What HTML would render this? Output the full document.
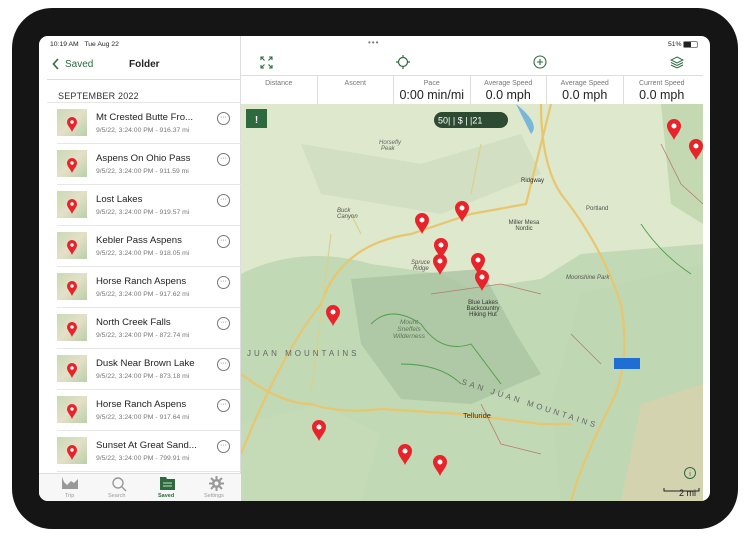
<!DOCTYPE html>
<html><head><meta charset="utf-8">
<style>
*{margin:0;padding:0;box-sizing:border-box}
body{width:750px;height:538px;background:#fff;font-family:"Liberation Sans",sans-serif;position:relative;overflow:hidden}
.frame{position:absolute;left:12px;top:8px;width:726px;height:521px;background:#151515;border-radius:40px}
.screen{position:absolute;left:39px;top:36px;width:671px;height:465px;background:#fff;border-radius:9px;overflow:hidden}
.side{position:absolute;left:0;top:0;width:202px;height:465px;background:#fff;border-right:1px solid #ddd}
.abs{position:absolute}
.row{position:absolute;left:18px;width:184px;height:41px;border-bottom:1px solid #e6e6e6}
.thumb{position:absolute;left:0;top:6px;width:30px;height:27px;background:linear-gradient(135deg,#c9d9b4,#e4e0c8 50%,#b9d0a8)}
.t{position:absolute;left:39px;top:9px;font-size:9.6px;color:#222;white-space:nowrap}
.s{position:absolute;left:39px;top:24px;font-size:6.8px;color:#777;white-space:nowrap}
.dots{position:absolute;left:160px;top:9px;width:13px;height:13px;border:1px solid #777;border-radius:50%;font-size:7px;line-height:9px;text-align:center;color:#555}
.stat{position:absolute;top:40px;height:28px;border-right:1px solid #ddd;text-align:center;width:76.5px}
.stat .l{font-size:7px;color:#777;margin-top:4px}
.stat .v{font-size:12.5px;color:#222;margin-top:1px}
.map{position:absolute;left:202px;top:68px;width:462px;height:397px;overflow:hidden;background:#dfe9cf}
</style></head><body>
<div class="frame"></div>
<div class="screen">
 <div class="side">
  <div class="abs" style="left:11px;top:5px;font-size:6.8px;color:#222">10:19 AM&nbsp;&nbsp;&nbsp;Tue Aug 22</div>
  <svg class="abs" style="left:13px;top:22px" width="8" height="12"><path d="M6 1 L1.5 6 L6 11" stroke="#2d6a3e" stroke-width="1.6" fill="none"/></svg>
  <div class="abs" style="left:26px;top:23px;font-size:10px;color:#2d6a3e">Saved</div>
  <div class="abs" style="left:90px;top:23px;font-size:10px;font-weight:bold;color:#222">Folder</div>
  <div class="abs" style="left:8px;top:43px;width:194px;height:1px;background:#ddd"></div>
  <div class="abs" style="left:19px;top:55px;font-size:9px;color:#333;letter-spacing:.2px">SEPTEMBER 2022</div>
  <div class="abs" style="left:8px;top:66px;width:194px;height:1px;background:#e6e6e6"></div>
  <div class="row" style="top:67px"><div class="thumb"></div><div class="t">Mt Crested Butte Fro...</div><div class="s">9/5/22, 3:24:00 PM - 916.37 mi</div><div class="dots">···</div></div>
  <div class="row" style="top:108px"><div class="thumb"></div><div class="t">Aspens On Ohio Pass</div><div class="s">9/5/22, 3:24:00 PM - 911.59 mi</div><div class="dots">···</div></div>
  <div class="row" style="top:149px"><div class="thumb"></div><div class="t">Lost Lakes</div><div class="s">9/5/22, 3:24:00 PM - 919.57 mi</div><div class="dots">···</div></div>
  <div class="row" style="top:190px"><div class="thumb"></div><div class="t">Kebler Pass Aspens</div><div class="s">9/5/22, 3:24:00 PM - 918.05 mi</div><div class="dots">···</div></div>
  <div class="row" style="top:231px"><div class="thumb"></div><div class="t">Horse Ranch Aspens</div><div class="s">9/5/22, 3:24:00 PM - 917.62 mi</div><div class="dots">···</div></div>
  <div class="row" style="top:272px"><div class="thumb"></div><div class="t">North Creek Falls</div><div class="s">9/5/22, 3:24:00 PM - 872.74 mi</div><div class="dots">···</div></div>
  <div class="row" style="top:313px"><div class="thumb"></div><div class="t">Dusk Near Brown Lake</div><div class="s">9/5/22, 3:24:00 PM - 873.18 mi</div><div class="dots">···</div></div>
  <div class="row" style="top:354px"><div class="thumb"></div><div class="t">Horse Ranch Aspens</div><div class="s">9/5/22, 3:24:00 PM - 917.64 mi</div><div class="dots">···</div></div>
  <div class="row" style="top:395px"><div class="thumb"></div><div class="t">Sunset At Great Sand...</div><div class="s">9/5/22, 3:24:00 PM - 799.91 mi</div><div class="dots">···</div></div>
  <svg class="abs" style="left:0;top:0" width="202" height="465">
   <defs><g id="sp"><path d="M0 0 C-1.5 -4 -5 -6.5 -5 -10 A5 5 0 1 1 5 -10 C5 -6.5 1.5 -4 0 0Z" fill="#e8232a"/><circle cx="0" cy="-10" r="1.7" fill="#fff"/></g></defs>
   <use href="#sp" x="33" y="96"/><use href="#sp" x="33" y="137"/><use href="#sp" x="33" y="178"/><use href="#sp" x="33" y="219"/><use href="#sp" x="33" y="260"/><use href="#sp" x="33" y="301"/><use href="#sp" x="33" y="342"/><use href="#sp" x="33" y="383"/><use href="#sp" x="33" y="424"/>
  </svg>
  <div class="abs" style="left:0;top:437px;width:202px;height:28px;background:#f7f7f7;border-top:1px solid #ddd"></div>
  <svg class="abs" style="left:22px;top:440px" width="18" height="14"><path d="M1 1V13H17V3L13 7 10 5 6 9 3 6Z" fill="#999"/></svg>
  <div class="abs" style="left:26px;top:457px;font-size:5.5px;color:#999">Trip</div>
  <svg class="abs" style="left:72px;top:440px" width="16" height="16"><circle cx="7" cy="7" r="5" stroke="#999" stroke-width="1.4" fill="none"/><path d="M11 11L15 15" stroke="#999" stroke-width="1.5"/></svg>
  <div class="abs" style="left:69px;top:457px;font-size:5.5px;color:#999">Search</div>
  <svg class="abs" style="left:121px;top:440px" width="15" height="14"><path d="M0 1H6L7 3H15V14H0Z" fill="#2d6a3e"/><path d="M3 7H12M3 10H12" stroke="#fff" stroke-width=".8"/></svg>
  <div class="abs" style="left:119px;top:457px;font-size:5.5px;color:#2d6a3e;font-weight:bold">Saved</div>
  <svg class="abs" style="left:170px;top:440px" width="15" height="15"><circle cx="7.5" cy="7.5" r="4.5" fill="#999"/><path d="M7.5 0V15M0 7.5H15M2 2L13 13M13 2L2 13" stroke="#999" stroke-width="2"/><circle cx="7.5" cy="7.5" r="2" fill="#f7f7f7"/></svg>
  <div class="abs" style="left:165px;top:457px;font-size:5.5px;color:#999">Settings</div>
 </div>
 <div class="abs" style="left:329px;top:2px;font-size:8px;color:#777;letter-spacing:1px">•••</div>
 <div class="abs" style="left:629px;top:5px;font-size:6.8px;color:#222">51%</div>
 <div class="abs" style="left:644px;top:5px;width:15px;height:7px;border:1px solid #888;border-radius:2px"><div style="width:7px;height:5px;background:#222"></div></div>
 <svg class="abs" style="left:221px;top:20px" width="13" height="13" stroke="#2d6a3e" stroke-width="1.1" fill="none"><path d="M1 4V1H4M9 1H12V4M12 9V12H9M4 12H1V9M1 1L4.5 4.5M12 1L8.5 4.5M12 12L8.5 8.5M1 12L4.5 8.5"/></svg>
 <svg class="abs" style="left:357px;top:19px" width="14" height="14" stroke="#2d6a3e" stroke-width="1.2" fill="none"><circle cx="7" cy="7" r="4.5"/><path d="M7 0V3M7 11V14M0 7H3M11 7H14"/></svg>
 <svg class="abs" style="left:494px;top:19px" width="14" height="14" stroke="#2d6a3e" stroke-width="1.1" fill="none"><circle cx="7" cy="7" r="6"/><path d="M7 4V10M4 7H10"/></svg>
 <svg class="abs" style="left:631px;top:20px" width="14" height="13" stroke="#2d6a3e" stroke-width="1" fill="none"><path d="M7 1L13 4L7 7L1 4Z M1 6.5L7 9.5L13 6.5M1 9L7 12L13 9"/></svg>
 <div class="abs" style="left:202px;top:39px;width:462px;height:1px;background:#ddd"></div>
 <div class="stat" style="left:202px"><div class="l">Distance</div></div>
 <div class="stat" style="left:278.5px"><div class="l">Ascent</div></div>
 <div class="stat" style="left:355px"><div class="l">Pace</div><div class="v">0:00 min/mi</div></div>
 <div class="stat" style="left:431.5px"><div class="l">Average Speed</div><div class="v">0.0 mph</div></div>
 <div class="stat" style="left:508px"><div class="l">Average Speed</div><div class="v">0.0 mph</div></div>
 <div class="stat" style="left:584.5px;border:none"><div class="l">Current Speed</div><div class="v">0.0 mph</div></div>
 <div class="map">
  <svg width="462" height="397" style="position:absolute;left:0;top:0">
   <rect width="462" height="397" fill="#dde8cc"/>
   <path d="M0 170 Q60 140 130 160 L200 170 L230 185 L300 175 L340 150 L462 140 V397 H0Z" fill="#bcd6b0" opacity=".85"/>
   <path d="M110 175 L240 165 L275 230 L300 270 L230 300 L160 295 L120 240Z" fill="#a8c2a0" opacity=".75"/>
   <path d="M340 190 L462 160 V397 H320 L310 300Z" fill="#c0d6b4" opacity=".85"/>
   <path d="M400 300 L462 280 V397 H380Z" fill="#d6d4ae" opacity=".85"/>
   <path d="M420 0 L462 0 V120 L430 100Z" fill="#c4d9b2"/>
   <path d="M0 320 L80 300 L140 330 L120 397 H0Z" fill="#c6dbb8" opacity=".8"/>
   <path d="M60 40 L180 60 L280 30 L300 70 L200 110 L80 90Z" fill="#cfdcbd" opacity=".7"/>
   <path d="M275 0 Q300 20 290 30 Q280 10 275 0Z" fill="#7ab6d8"/>
   <path d="M0 350 Q40 250 80 200 Q100 140 170 130 L230 110 L285 100 L310 0" stroke="#e8c66e" stroke-width="2.2" fill="none"/>
   <path d="M300 0 Q300 60 320 90 Q360 140 380 200 Q390 260 370 300 Q340 360 330 397" stroke="#e8c66e" stroke-width="2.2" fill="none"/>
   <path d="M0 270 Q40 300 70 300 Q100 310 140 305 L220 310 L300 320 L330 320" stroke="#e8c66e" stroke-width="2.2" fill="none"/>
   <path d="M110 110 L120 130 M90 130 L70 290 M230 90 L240 40" stroke="#ddd08a" stroke-width="1.2" fill="none"/>
   <path d="M130 220 Q150 200 180 220 Q200 250 230 240 L260 280 M400 120 Q420 150 450 170 M160 260 Q200 260 220 280" stroke="#4d9e4a" stroke-width=".9" fill="none"/>
   <path d="M190 190 L260 180 L300 190 M240 300 L260 340 L300 350 M330 230 L360 260 M420 40 L440 80 L462 100" stroke="#b77a6d" stroke-width=".8" fill="none"/>
   <text x="168" y="220" font-size="6.5" fill="#5b7a5b" font-style="italic" text-anchor="middle">Mount<tspan x="168" dy="7">Sneffels</tspan><tspan x="168" dy="7">Wilderness</tspan></text>
   <text x="6" y="252" font-size="8" fill="#666" letter-spacing="3">JUAN MOUNTAINS</text>
   <text x="220" y="280" font-size="8" fill="#666" letter-spacing="3" transform="rotate(18 220 280)">SAN JUAN MOUNTAINS</text>
   <text x="222" y="314" font-size="7.5" fill="#333">Telluride</text>
   <text x="283" y="120" font-size="6" fill="#444" text-anchor="middle">Miller Mesa<tspan x="283" dy="6">Nordic</tspan></text>
   <text x="242" y="200" font-size="6" fill="#333" text-anchor="middle">Blue Lakes<tspan x="242" dy="6">Backcountry</tspan><tspan x="242" dy="6">Hiking Hut</tspan></text>
   <text x="96" y="108" font-size="6" fill="#555" font-style="italic">Buck<tspan x="96" dy="6">Canyon</tspan></text>
   <text x="170" y="160" font-size="6" fill="#555" font-style="italic">Spruce<tspan x="172" dy="6">Ridge</tspan></text>
   <text x="280" y="78" font-size="6" fill="#333">Ridgway</text>
   <text x="345" y="106" font-size="6" fill="#555">Portland</text>
   <text x="325" y="175" font-size="6" fill="#555" font-style="italic">Moonshine Park</text>
   <text x="138" y="40" font-size="6" fill="#666" font-style="italic">Horsefly<tspan x="140" dy="6">Peak</tspan></text>
   <rect x="373" y="254" width="26" height="11" fill="#1f6ed4"/>
   <rect x="193" y="8" width="74" height="16" rx="8" fill="#2d4a33"/>
   <text x="197" y="19.5" font-size="9" fill="#fff">50|  |  $  |  |21</text>
   <rect x="5" y="5" width="21" height="19" fill="#2d6a3e"/>
   <text x="15.5" y="19" font-size="10" fill="#fff" text-anchor="middle" font-weight="bold">!</text>
   <circle cx="449" cy="369" r="5.5" stroke="#2d6a3e" fill="none"/><text x="449" y="372" font-size="7" fill="#2d6a3e" text-anchor="middle">i</text>
   <path d="M423 384V387H458V384" stroke="#222" fill="none"/><text x="438" y="392" font-size="9" fill="#222">2 mi</text>
  </svg>
  <svg width="462" height="397" style="position:absolute;left:0;top:0">
   <defs><g id="p"><path d="M0 0 C-2 -5 -7 -9 -7 -14 A7 7 0 1 1 7 -14 C7 -9 2 -5 0 0Z" fill="#e8232a"/><circle cx="0" cy="-14" r="2.5" fill="#fff"/></g></defs>
   <use href="#p" x="433" y="36"/><use href="#p" x="455" y="56"/>
   <use href="#p" x="181" y="130"/><use href="#p" x="221" y="118"/>
   <use href="#p" x="200" y="155"/><use href="#p" x="199" y="171"/>
   <use href="#p" x="237" y="170"/><use href="#p" x="241" y="187"/>
   <use href="#p" x="92" y="222"/><use href="#p" x="78" y="337"/>
   <use href="#p" x="164" y="361"/><use href="#p" x="199" y="372"/>
  </svg>
 </div>
</div>
</body></html>
